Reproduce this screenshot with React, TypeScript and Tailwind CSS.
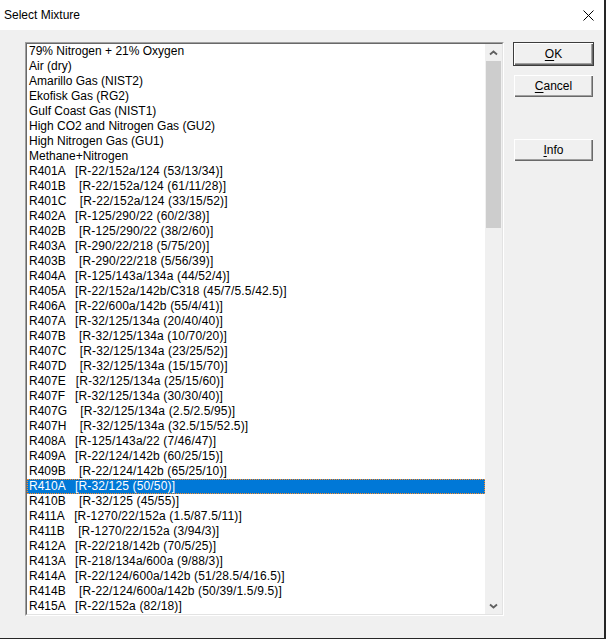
import type { ReactNode } from "react";

const gases = [
  "79% Nitrogen + 21% Oxygen",
  "Air (dry)",
  "Amarillo Gas (NIST2)",
  "Ekofisk Gas (RG2)",
  "Gulf Coast Gas (NIST1)",
  "High CO2 and Nitrogen Gas (GU2)",
  "High Nitrogen Gas (GU1)",
  "Methane+Nitrogen",
];

const refrigerants: [string, string][] = [
  ["R401A", "[R-22/152a/124 (53/13/34)]"],
  ["R401B", "[R-22/152a/124 (61/11/28)]"],
  ["R401C", "[R-22/152a/124 (33/15/52)]"],
  ["R402A", "[R-125/290/22 (60/2/38)]"],
  ["R402B", "[R-125/290/22 (38/2/60)]"],
  ["R403A", "[R-290/22/218 (5/75/20)]"],
  ["R403B", "[R-290/22/218 (5/56/39)]"],
  ["R404A", "[R-125/143a/134a (44/52/4)]"],
  ["R405A", "[R-22/152a/142b/C318 (45/7/5.5/42.5)]"],
  ["R406A", "[R-22/600a/142b (55/4/41)]"],
  ["R407A", "[R-32/125/134a (20/40/40)]"],
  ["R407B", "[R-32/125/134a (10/70/20)]"],
  ["R407C", "[R-32/125/134a (23/25/52)]"],
  ["R407D", "[R-32/125/134a (15/15/70)]"],
  ["R407E", "[R-32/125/134a (25/15/60)]"],
  ["R407F", "[R-32/125/134a (30/30/40)]"],
  ["R407G", "[R-32/125/134a (2.5/2.5/95)]"],
  ["R407H", "[R-32/125/134a (32.5/15/52.5)]"],
  ["R408A", "[R-125/143a/22 (7/46/47)]"],
  ["R409A", "[R-22/124/142b (60/25/15)]"],
  ["R409B", "[R-22/124/142b (65/25/10)]"],
  ["R410A", "[R-32/125 (50/50)]"],
  ["R410B", "[R-32/125 (45/55)]"],
  ["R411A", "[R-1270/22/152a (1.5/87.5/11)]"],
  ["R411B", "[R-1270/22/152a (3/94/3)]"],
  ["R412A", "[R-22/218/142b (70/5/25)]"],
  ["R413A", "[R-218/134a/600a (9/88/3)]"],
  ["R414A", "[R-22/124/600a/142b (51/28.5/4/16.5)]"],
  ["R414B", "[R-22/124/600a/142b (50/39/1.5/9.5)]"],
  ["R415A", "[R-22/152a (82/18)]"],
];

type Row = { key: string; name: string; mix?: string };

const rows: Row[] = [
  ...gases.map((name) => ({ key: name, name })),
  ...refrigerants.map(([name, mix]) => {
    const last = name.slice(-1);
    const gap = last === "A" || last === "E" || last === "F" ? "   " : "    ";
    return { key: name, name: `${name}${gap}`, mix };
  }),
];

const selected = "R410A";

function Chevron({ down }: { down?: boolean }) {
  return (
    <svg width="9" height="6" viewBox="0 0 9 6" className="block">
      <path
        d={down ? "M1 1.5 L4.5 4.5 L8 1.5" : "M1 4.5 L4.5 1.5 L8 4.5"}
        fill="none"
        stroke="#606060"
        strokeWidth="1.8"
      />
    </svg>
  );
}

function ScrollBar() {
  return (
    <div className="flex w-[17px] shrink-0 flex-col bg-[#f0f0f0]">
      <div className="flex h-[17px] items-center justify-center">
        <Chevron />
      </div>
      <div className="flex-1">
        <div className="mx-px h-[167px] bg-[#cdcdcd]" />
      </div>
      <div className="flex h-[17px] items-center justify-center">
        <Chevron down />
      </div>
    </div>
  );
}

function MixtureList() {
  return (
    <div className="h-[574px] w-[479px] shrink-0 border-t border-l border-t-[#a0a0a0] border-l-[#a0a0a0] border-r border-b border-r-white border-b-white">
      <div className="flex h-full border-t border-l border-t-[#696969] border-l-[#696969] border-r border-b border-r-[#e3e3e3] border-b-[#e3e3e3]">
        <ul className="flex-1 overflow-hidden bg-white">
          {rows.map((row) => {
            const isSelected = row.key === selected;
            return (
              <li
                key={row.key}
                className={
                  isSelected
                    ? "h-[15px] whitespace-pre border border-dotted border-[#ff8c28] bg-[#0078d7] pl-px text-[12px] leading-[13px] text-white"
                    : "h-[15px] whitespace-pre pl-[2px] text-[12px] leading-[15px] text-black"
                }
              >
                {row.name}
                {row.mix ? <span className="tracking-[0.15px]">{row.mix}</span> : null}
              </li>
            );
          })}
        </ul>
        <ScrollBar />
      </div>
    </div>
  );
}

function DialogButton({
  children,
  isDefault,
  className,
}: {
  children: ReactNode;
  isDefault?: boolean;
  className?: string;
}) {
  return (
    <button
      type="button"
      className={`${className ?? ""} ${
        isDefault ? "border border-[#3c3c3c]" : "border border-transparent"
      } h-[24px] w-[81px] bg-[#f0f0f0] p-0 text-[12px] text-black`}
    >
      <span className="flex h-full w-full items-center justify-center shadow-[inset_1px_1px_0_#ffffff,inset_-1px_-1px_0_#696969,inset_-2px_-2px_0_#a0a0a0]">
        {children}
      </span>
    </button>
  );
}

export default function App() {
  return (
    <div className="flex h-[639px] w-[606px] flex-col border-r-2 border-b border-[#262626] bg-[#f0f0f0] font-['Liberation_Sans',Arial,sans-serif]">
      <div className="flex h-[30px] shrink-0 items-center justify-between bg-white pl-[4px] pr-[10px]">
        <span className="text-[12px] text-black">Select Mixture</span>
        <svg width="11" height="11" viewBox="0 0 11 11">
          <path d="M0.5 0.5 L10.5 10.5 M10.5 0.5 L0.5 10.5" stroke="#000" strokeWidth="1" />
        </svg>
      </div>
      <div className="flex gap-[9px] pl-[25px] pt-[12px]">
        <MixtureList />
        <div className="flex flex-col">
          <DialogButton isDefault>
            <span>
              <span className="underline underline-offset-2">O</span>K
            </span>
          </DialogButton>
          <DialogButton className="mt-[8px]">
            <span>
              <span className="underline underline-offset-2">C</span>ancel
            </span>
          </DialogButton>
          <DialogButton className="mt-[40px]">
            <span>
              <span className="underline underline-offset-2">I</span>nfo
            </span>
          </DialogButton>
        </div>
      </div>
    </div>
  );
}
